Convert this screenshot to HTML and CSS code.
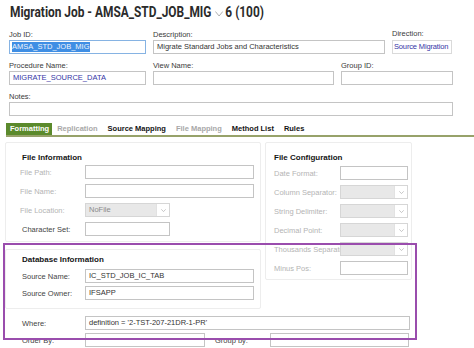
FILE: index.html
```html
<!DOCTYPE html>
<html lang="en">
<head>
    <meta charset="UTF-8">
    <title>Migration Job</title>
    <link rel="stylesheet" href="styles.css">
</head>
<body>

<div class="job-page">
    <h1 class="job-title">
        <span class="title-main">Migration Job - AMSA_STD_JOB_MIG</span>
        <svg class="title-chevron" width="10" height="6" viewBox="0 0 10 6"><polyline points="0.5,0.5 5,5 9.5,0.5"/></svg>
        <span class="title-count">6 (100)</span>
    </h1>

    <div class="header-form">
        <div class="form-row">
            <div class="field w-jobid">
                <div class="field-label">Job ID:</div>
                <div class="text-box focused"><span class="selection">AMSA_STD_JOB_MIG</span></div>
            </div>
            <div class="field w-desc">
                <div class="field-label">Description:</div>
                <div class="text-box">Migrate Standard Jobs and Characteristics</div>
            </div>
            <div class="field w-direction">
                <div class="field-label lifted">Direction:</div>
                <div class="text-box link-value">Source Migration</div>
            </div>
        </div>
        <div class="form-row">
            <div class="field w-jobid">
                <div class="field-label">Procedure Name:</div>
                <div class="text-box link-value">MIGRATE_SOURCE_DATA</div>
            </div>
            <div class="field w-view">
                <div class="field-label">View Name:</div>
                <div class="text-box"></div>
            </div>
            <div class="field w-group">
                <div class="field-label">Group ID:</div>
                <div class="text-box"></div>
            </div>
        </div>
        <div class="form-row">
            <div class="field w-notes">
                <div class="field-label">Notes:</div>
                <div class="text-box"></div>
            </div>
        </div>
    </div>

    <div class="tab-bar">
        <div class="tab active">Formatting</div>
        <div class="tab muted">Replication</div>
        <div class="tab">Source Mapping</div>
        <div class="tab muted">File Mapping</div>
        <div class="tab">Method List</div>
        <div class="tab">Rules</div>
    </div>

    <div class="tab-content">
        <div class="panel file-info">
            <div class="panel-title">File Information</div>
            <div class="panel-rows">
                <div class="panel-row">
                    <div class="row-label muted">File Path:</div>
                    <div class="text-box wide"></div>
                </div>
                <div class="panel-row">
                    <div class="row-label muted">File Name:</div>
                    <div class="text-box wide"></div>
                </div>
                <div class="panel-row">
                    <div class="row-label muted">File Location:</div>
                    <div class="select-box short">
                        <span class="select-value">NoFile</span>
                        <span class="select-arrow"><svg width="5" height="3" viewBox="0 0 5 3"><polyline points="0.3,0.3 2.5,2.6 4.7,0.3"/></svg></span>
                    </div>
                </div>
                <div class="panel-row">
                    <div class="row-label">Character Set:</div>
                    <div class="text-box short"></div>
                </div>
            </div>
        </div>

        <div class="panel file-config">
            <div class="panel-title">File Configuration</div>
            <div class="panel-rows">
                <div class="panel-row">
                    <div class="row-label muted">Date Format:</div>
                    <div class="text-box cfg"></div>
                </div>
                <div class="panel-row">
                    <div class="row-label muted">Column Separator:</div>
                    <div class="select-box cfg"><span class="select-value"></span><span class="select-arrow"><svg width="5" height="3" viewBox="0 0 5 3"><polyline points="0.3,0.3 2.5,2.6 4.7,0.3"/></svg></span></div>
                </div>
                <div class="panel-row">
                    <div class="row-label muted">String Delimiter:</div>
                    <div class="select-box cfg"><span class="select-value"></span><span class="select-arrow"><svg width="5" height="3" viewBox="0 0 5 3"><polyline points="0.3,0.3 2.5,2.6 4.7,0.3"/></svg></span></div>
                </div>
                <div class="panel-row">
                    <div class="row-label muted">Decimal Point:</div>
                    <div class="select-box cfg"><span class="select-value"></span><span class="select-arrow"><svg width="5" height="3" viewBox="0 0 5 3"><polyline points="0.3,0.3 2.5,2.6 4.7,0.3"/></svg></span></div>
                </div>
                <div class="panel-row">
                    <div class="row-label muted">Thousands Separator:</div>
                    <div class="select-box cfg"><span class="select-value"></span><span class="select-arrow"><svg width="5" height="3" viewBox="0 0 5 3"><polyline points="0.3,0.3 2.5,2.6 4.7,0.3"/></svg></span></div>
                </div>
                <div class="panel-row">
                    <div class="row-label muted">Minus Pos:</div>
                    <div class="text-box cfg"></div>
                </div>
            </div>
        </div>

        <div class="panel db-info">
            <div class="panel-title">Database Information</div>
            <div class="panel-rows tight">
                <div class="panel-row">
                    <div class="row-label">Source Name:</div>
                    <div class="text-box wide">IC_STD_JOB_IC_TAB</div>
                </div>
                <div class="panel-row">
                    <div class="row-label">Source Owner:</div>
                    <div class="text-box wide">IFSAPP</div>
                </div>
            </div>
        </div>
    </div>

    <div class="query-rows">
        <div class="panel-row">
            <div class="row-label">Where:</div>
            <div class="text-box where">definition = '2-TST-207-21DR-1-PR'</div>
        </div>
        <div class="panel-row">
            <div class="row-label">Order By:</div>
            <div class="text-box order"></div>
            <div class="group-label">Group by:</div>
            <div class="text-box group"></div>
        </div>
    </div>

    <!-- annotation drawn over the screenshot -->
    <div class="highlight-box"></div>
</div>

</body>
</html>
```

FILE: styles.css
```css
/* Migration job form */
:root {
    --label: #3a3a3a;
    --muted: #b4b4b4;
    --box-border: #c4c4c4;
    --panel-border: #ededed;
    --link-blue: #3535a6;
    --tab-green: #5b8a2c;
    --tab-line: #97a26a;
    --marker: #9a4dad;
}

body {
    margin: 0;
    padding: 0;
    background-color: #ffffff;
    color: var(--label);
    font-family: "Liberation Sans", Arial, sans-serif;
    font-size: 7.5px;
    overflow: hidden;
}

.job-page {
    position: relative;
    width: 474px;
    height: 348px;
}

.job-title {
    margin: 0;
    padding: 3px 0 0 10px;
    height: 20px;
    line-height: 20px;
    font-family: "Roboto", "Liberation Sans", sans-serif;
    font-size: 14.5px;
    font-weight: 700;
    color: #2b2b2b;
    white-space: nowrap;
    display: flex;
    align-items: center;
    transform: scaleX(0.82);
    transform-origin: 10px 0;
}

.title-main,
.title-count {
    display: inline-block;
}

.title-chevron {
    margin: 2px 3px 0 4px;
    fill: none;
    stroke: #a8a8a8;
    stroke-width: 1;
}

/* header fields */
.header-form {
    padding: 6px 0 0 9px;
    display: flex;
    flex-direction: column;
    gap: 7px;
}

.form-row {
    display: flex;
    gap: 7px;
    align-items: flex-end;
}

.field-label {
    height: 9px;
    line-height: 9px;
    margin-bottom: 1px;
    color: var(--label);
    white-space: nowrap;
}

.field-label.lifted {
    margin-bottom: 2px;
}

.w-jobid { width: 137px; }
.w-desc { width: 232px; }
.w-direction { width: 60px; }
.w-view { width: 181px; }
.w-group { width: 112px; }
.w-notes { width: 444px; }

.text-box {
    box-sizing: border-box;
    height: 14px;
    border: 1px solid var(--box-border);
    background-color: #ffffff;
    padding: 0 3px;
    line-height: 12px;
    color: #333;
    white-space: nowrap;
    overflow: hidden;
}

.text-box.focused {
    border-color: #86b3e3;
    padding-left: 2px;
}

.selection {
    display: inline-block;
    margin-top: 1px;
    height: 10px;
    line-height: 10px;
    background-color: #3f8ee4;
    color: #eef4fb;
}

.link-value {
    color: var(--link-blue);
}

.w-direction .text-box {
    border-color: #dadada;
    padding: 0 1px;
    letter-spacing: -0.15px;
}

/* tabs */
.tab-bar {
    display: flex;
    margin: 7px 0 0 6px;
    height: 12px;
    border-bottom: 2px solid var(--tab-line);
}

.tab {
    padding: 0 5px;
    line-height: 12px;
    font-size: 7.5px;
    font-weight: 700;
    color: #141414;
    white-space: nowrap;
}

.tab.muted {
    color: #a8a8a8;
}

.tab.active {
    padding: 0 3px 0 4px;
    background-color: var(--tab-green);
    color: #ffffff;
}

/* panels */
.tab-content {
    display: grid;
    grid-template-columns: 256px 147px;
    grid-template-rows: 100px auto;
    column-gap: 4px;
    row-gap: 7px;
    margin: 5px 0 0 5px;
}

.panel {
    box-sizing: border-box;
    border: 1px solid var(--panel-border);
    border-radius: 2px;
}

.file-info {
    grid-column: 1;
    grid-row: 1;
    padding: 10px 0 0 14px;
}

.file-config {
    grid-column: 2;
    grid-row: 1 / span 2;
    align-self: start;
    height: 138px;
    padding: 10px 0 0 6px;
}

.db-info {
    grid-column: 1;
    grid-row: 2;
    height: 60px;
    padding: 5px 0 0 14px;
}

.panel-title {
    height: 10px;
    line-height: 10px;
    font-size: 8px;
    font-weight: 700;
    color: #151515;
    margin-left: 2px;
    margin-bottom: 2px;
}

.file-config .panel-title {
    margin-bottom: 3px;
}

.db-info .panel-title {
    margin-bottom: 4px;
}

.panel-rows {
    display: flex;
    flex-direction: column;
    gap: 5px;
}

.panel-rows.tight {
    gap: 3px;
}

.panel-row {
    display: flex;
    align-items: center;
    height: 14px;
}

.row-label {
    width: 65px;
    padding-left: 2px;
    box-sizing: border-box;
    color: #444;
    white-space: nowrap;
}

.file-info .row-label.muted {
    padding-left: 0;
}

.file-config .row-label {
    width: 68px;
}

.row-label.muted {
    color: var(--muted);
}

.text-box.wide { width: 169px; }
.text-box.short { width: 85px; }
.text-box.cfg { width: 68px; }

.select-box {
    box-sizing: border-box;
    height: 14px;
    display: flex;
    border: 1px solid #d6d6d6;
    background-color: #e8e8e8;
}

.select-box.short { width: 85px; }
.select-box.cfg { width: 68px; }

.select-value {
    flex: 1;
    padding-left: 3px;
    line-height: 12px;
    color: #8a8a8a;
}

.select-arrow {
    width: 12px;
    display: flex;
    align-items: center;
    justify-content: center;
    background-color: #ffffff;
    border-left: 1px solid #e2e2e2;
}

.select-arrow svg {
    fill: none;
    stroke: #b0b0b0;
    stroke-width: 0.7;
}

/* where / order by */
.query-rows {
    display: flex;
    flex-direction: column;
    gap: 3px;
    margin: 7px 0 0 20px;
}

.text-box.where { width: 325px; }
.text-box.order { width: 120px; }
.text-box.group { width: 139px; }

.group-label {
    width: 65px;
    padding-left: 10px;
    box-sizing: border-box;
    color: #444;
    white-space: nowrap;
}

.highlight-box {
    position: absolute;
    left: 3px;
    top: 243px;
    width: 414px;
    height: 97px;
    box-sizing: border-box;
    border: 2px solid var(--marker);
    pointer-events: none;
}
```
